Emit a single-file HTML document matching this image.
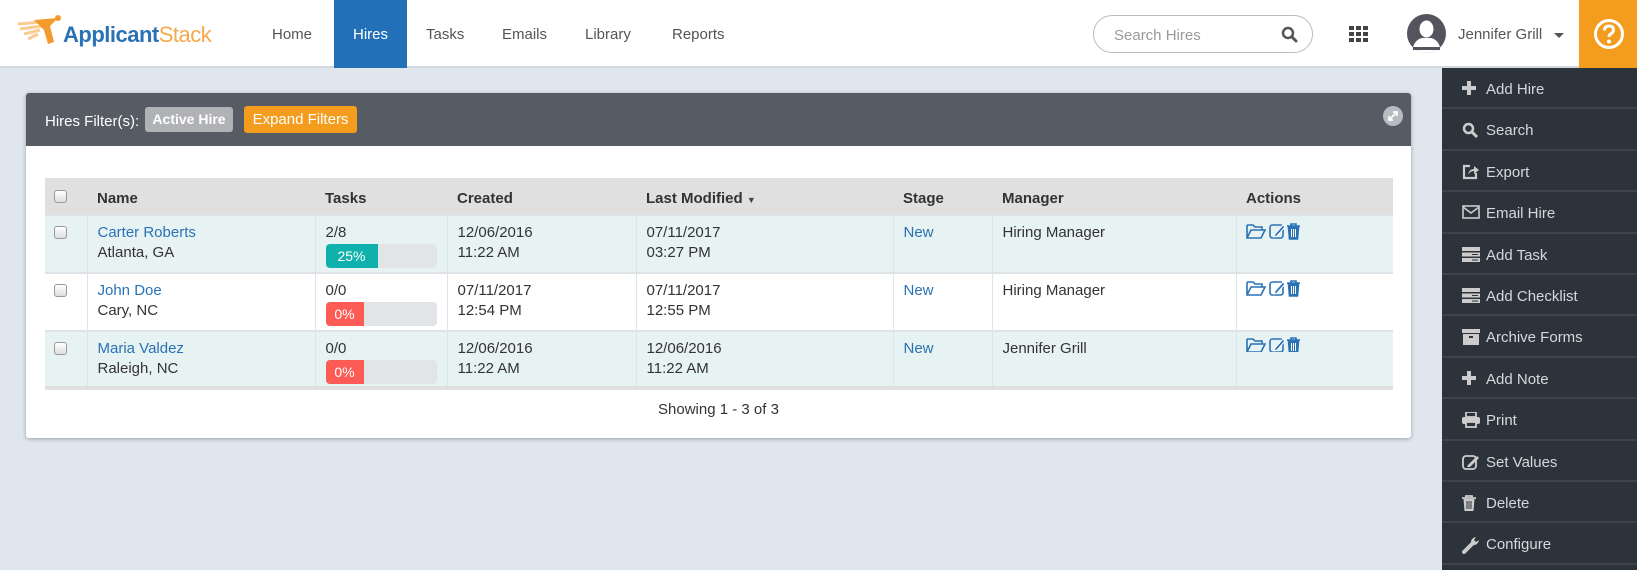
<!DOCTYPE html>
<html><head><meta charset="utf-8"><style>
*{box-sizing:border-box;margin:0;padding:0}
body{width:1637px;height:570px;overflow:hidden;background:#dfe6ee;font-family:"Liberation Sans",sans-serif;font-size:15px;color:#333;position:relative}
.hdr{position:absolute;left:0;top:0;width:1637px;height:68px;background:#fff;border-bottom:2px solid #d3d8de}
.nav{position:absolute;top:0;height:66px;line-height:70px;color:#555;font-size:15px}
.abs{position:absolute}
.side{position:absolute;left:1442px;top:68px;width:195px;height:502px;background:#2d333b}
.si{height:41.4px;border-bottom:2px solid #3d444c;color:#d5d8dc;line-height:43px;padding-left:44px;position:relative;font-size:15px}
.si svg{position:absolute;left:20px;top:13px}
.panel{position:absolute;left:26px;top:93px;width:1385px;height:345px;background:#fff;border-radius:3px;box-shadow:0 1px 4px rgba(0,0,0,.3)}
.ph{height:53px;background:#575c64;border-radius:3px 3px 0 0;position:relative;color:#fff}
table{position:absolute;left:19px;top:85px;border-collapse:collapse;width:1348px}
th{background:#e0e0e0;height:37px;text-align:left;font-weight:bold;color:#333;padding:5px 0 0 10px;font-size:15px}
td{vertical-align:top;padding:7px 0 0 10px;height:58px;border-right:1px solid #dde3e6;border-top:2px solid #dde3e6;line-height:20px}
tr.a td{background:#e7f2f2}
td:last-child{border-right:none}
.cb{display:inline-block;width:13px;height:13px;border:1px solid #999;border-radius:3px;background:linear-gradient(#fff,#ddd);margin-top:3px}
a{color:#2a72b5;text-decoration:none}
.bar{width:111px;height:24px;background:#e1e5e8;border-radius:4px;overflow:hidden;margin-top:1px}
.bar span{display:block;height:24px;color:#fff;text-align:center;line-height:24px;font-size:14px}
</style></head><body>
<div class="hdr">
  <svg class="abs" style="left:14px;top:14px" width="54" height="34" viewBox="0 0 54 34"><path d="M4 10 L28 8 M6 15 L28 12 M10 20 L26 16 M14 25 L24 20" stroke="#f7a94a" stroke-width="3" opacity=".6"/><path d="M20 6 L44 4 L36 12 L40 28 L34 30 L30 16 Z" fill="#f39a2c"/><circle cx="44" cy="4" r="3" fill="#f39a2c"/></svg>
  <div class="abs" style="left:63px;top:22px;font-size:22px;font-weight:bold;color:#2a72b5;letter-spacing:-0.5px">Applicant<span style="color:#f7a94a;font-weight:normal">Stack</span></div>
  <div class="nav" style="left:272px">Home</div>
  <div class="nav" style="left:334px;width:73px;background:#2271b8;color:#fff;text-align:center;height:68px">Hires</div>
  <div class="nav" style="left:426px">Tasks</div>
  <div class="nav" style="left:502px">Emails</div>
  <div class="nav" style="left:585px">Library</div>
  <div class="nav" style="left:672px">Reports</div>
  <div class="abs" style="left:1093px;top:15px;width:220px;height:38px;border:1px solid #bbb;border-radius:19px;color:#999;line-height:39px;padding-left:20px">Search Hires
    <svg class="abs" style="left:187px;top:10px" width="17" height="17" viewBox="0 0 17 17"><circle cx="7" cy="7" r="5" stroke="#555" stroke-width="2.5" fill="none"/><path d="M11 11 L15 15" stroke="#555" stroke-width="3" stroke-linecap="round"/></svg></div>
  <svg class="abs" style="left:1349px;top:26px" width="20" height="16"><g fill="#444"><rect x="0" y="0" width="5" height="4"/><rect x="7" y="0" width="5" height="4"/><rect x="14" y="0" width="5" height="4"/><rect x="0" y="6" width="5" height="4"/><rect x="7" y="6" width="5" height="4"/><rect x="14" y="6" width="5" height="4"/><rect x="0" y="12" width="5" height="4"/><rect x="7" y="12" width="5" height="4"/><rect x="14" y="12" width="5" height="4"/></g></svg>
  <svg class="abs" style="left:1407px;top:14px" width="39" height="39" viewBox="0 0 39 39"><clipPath id="c"><circle cx="19.5" cy="19.5" r="19.5"/></clipPath><circle cx="19.5" cy="19.5" r="19.5" fill="#55535e"/><g clip-path="url(#c)" fill="#fff"><ellipse cx="19.5" cy="15" rx="7" ry="8.5"/><path d="M5 39 Q6 26 15 24 L24 24 Q33 26 34 39 Z"/></g><rect x="6" y="33" width="27" height="3" fill="#55535e"/></svg>
  <div class="abs" style="left:1458px;top:26px;color:#555">Jennifer Grill</div>
  <div class="abs" style="left:1554px;top:33px;border-left:5px solid transparent;border-right:5px solid transparent;border-top:5px solid #555"></div>
  <div class="abs" style="left:1579px;top:0;width:58px;height:68px;background:#f39c1e">
    <svg class="abs" style="left:14px;top:18px" width="32" height="32" viewBox="0 0 32 32"><circle cx="16" cy="16" r="13.5" stroke="#fff" stroke-width="3" fill="none"/><path d="M11.5 12.5 Q11.5 8 16 8 Q20.5 8 20.5 12 Q20.5 14.5 17.5 16 Q16 17 16 19" stroke="#fff" stroke-width="3" fill="none"/><circle cx="16" cy="23.5" r="2" fill="#fff"/></svg>
  </div>
</div>
<div class="panel">
  <div class="ph">
    <div class="abs" style="left:19px;top:20px;font-size:15px">Hires Filter(s):</div>
    <div class="abs" style="left:119px;top:14px;width:88px;height:25px;background:#b0b2b5;border-radius:3px;font-weight:bold;font-size:14px;text-align:center;line-height:25px">Active Hire</div>
    <div class="abs" style="left:218px;top:13px;width:113px;height:27px;background:#f39c1e;border-radius:3px;text-align:center;line-height:28px">Expand Filters</div>
    <svg class="abs" style="left:1357px;top:13px" width="20" height="20"><circle cx="10" cy="10" r="10" fill="#b6bcc2"/><path d="M6 14 L14 6 M10 6 L14 6 L14 10 M6 10 L6 14 L10 14" stroke="#fff" stroke-width="1.7" fill="none"/></svg>
  </div>
  <table>
    <tr><th style="width:42px;padding-left:9px"><span class="cb" style="margin-top:0"></span></th><th style="width:228px">Name</th><th style="width:132px">Tasks</th><th style="width:189px">Created</th><th style="width:257px">Last Modified <span style="font-size:9px;color:#444">▼</span></th><th style="width:99px">Stage</th><th style="width:244px">Manager</th><th>Actions</th></tr>
    <tr class="a"><td style="padding-left:9px"><span class="cb"></span></td><td><a>Carter Roberts</a><br>Atlanta, GA</td><td>2/8<div class="bar"><span style="width:52px;background:#10b0ac">25%</span></div></td><td>12/06/2016<br>11:22 AM</td><td>07/11/2017<br>03:27 PM</td><td><a>New</a></td><td>Hiring Manager</td><td class="ic"></td></tr>
    <tr><td style="padding-left:9px"><span class="cb"></span></td><td><a>John Doe</a><br>Cary, NC</td><td>0/0<div class="bar"><span style="width:38px;background:#fd5b55">0%</span></div></td><td>07/11/2017<br>12:54 PM</td><td>07/11/2017<br>12:55 PM</td><td><a>New</a></td><td>Hiring Manager</td><td class="ic"></td></tr>
    <tr class="a"><td style="padding-left:9px"><span class="cb"></span></td><td><a>Maria Valdez</a><br>Raleigh, NC</td><td>0/0<div class="bar"><span style="width:38px;background:#fd5b55">0%</span></div></td><td>12/06/2016<br>11:22 AM</td><td>12/06/2016<br>11:22 AM</td><td><a>New</a></td><td>Jennifer Grill</td><td class="ic"></td></tr>
  </table>
  <div class="abs" style="left:19px;top:293px;width:1348px;height:4px;background:#e0e0e0"></div>
  <div class="abs" style="left:0;top:308px;width:1385px;text-align:center;color:#333">Showing 1 - 3 of 3</div>
</div>
<svg class="abs" style="left:1246px;top:222px" width="60" height="130">
<defs><g id="ic" fill="none" stroke="#2a72b5" stroke-width="1.6">
<path d="M1 3 L7 3 L9 5 L16 5 L16 8 M1 3 L1 16 L15 16 L19 8 L5 8 L1 16"/>
<rect x="24" y="3" width="13" height="13" rx="2.5"/>
<path d="M29 12 L37 3 L39 5 L31 14 L28 15 Z" fill="#2a72b5" stroke="#fff" stroke-width="1"/>
<path d="M41 4 L54 4 M45 4 L45 2 L50 2 L50 4" />
<path d="M42.5 5 L43.5 17 L51.5 17 L52.5 5 Z" fill="#2a72b5"/>
<path d="M45.5 7 L45.5 15 M47.5 7 L47.5 15 M49.5 7 L49.5 15" stroke="#fff" stroke-width="1"/>
</g></defs>
<use href="#ic" y="0"/><use href="#ic" y="57"/><use href="#ic" y="114"/>
</svg>
<div class="side">
  <div class="si"><svg width="14" height="14"><path d="M7 0V14M0 7H14" stroke="#ccc" stroke-width="4"/></svg>Add Hire</div>
  <div class="si"><svg width="16" height="16"><circle cx="6.5" cy="6.5" r="4.5" stroke="#ccc" stroke-width="2.5" fill="none"/><path d="M10 10L15 15" stroke="#ccc" stroke-width="3"/></svg>Search</div>
  <div class="si"><svg width="17" height="16"><path d="M8 2H2V14H14V9" stroke="#ccc" stroke-width="2.2" fill="none"/><path d="M6 11Q7 5 12 5V2L17 6L12 10V7Q8 7 6 11Z" fill="#ccc"/></svg>Export</div>
  <div class="si"><svg width="18" height="14"><rect x="1" y="1" width="16" height="12" stroke="#ccc" stroke-width="1.6" fill="none"/><path d="M1 2L9 8L17 2" stroke="#ccc" stroke-width="1.6" fill="none"/></svg>Email Hire</div>
  <div class="si"><svg width="18" height="15"><g fill="#ccc"><rect y="0" width="18" height="4"/><rect y="5.5" width="18" height="4"/><rect y="11" width="18" height="4"/></g><path d="M10 7.5H16M10 13H16" stroke="#2d333b"/></svg>Add Task</div>
  <div class="si"><svg width="18" height="15"><g fill="#ccc"><rect y="0" width="18" height="4"/><rect y="5.5" width="18" height="4"/><rect y="11" width="18" height="4"/></g><path d="M10 7.5H16M10 13H16" stroke="#2d333b"/></svg>Add Checklist</div>
  <div class="si"><svg width="18" height="16"><rect y="0" width="18" height="4" fill="#ccc"/><rect x="1" y="5" width="16" height="11" fill="#ccc"/><rect x="7" y="7" width="4" height="2" fill="#2d333b"/></svg>Archive Forms</div>
  <div class="si"><svg width="14" height="14"><path d="M7 0V14M0 7H14" stroke="#ccc" stroke-width="4"/></svg>Add Note</div>
  <div class="si"><svg width="18" height="16"><rect x="4" y="0" width="10" height="5" stroke="#ccc" stroke-width="1.8" fill="none"/><rect x="0" y="5" width="18" height="7" rx="2" fill="#ccc"/><rect x="4" y="10" width="10" height="5" stroke="#ccc" stroke-width="1.8" fill="#2d333b"/></svg>Print</div>
  <div class="si"><svg width="18" height="16"><rect x="1" y="2" width="13" height="13" rx="3" stroke="#ccc" stroke-width="1.8" fill="none"/><path d="M6 11L15 2L17 4L8 13L5 13Z" fill="#ccc"/></svg>Set Values</div>
  <div class="si"><svg width="14" height="16"><path d="M0 3H14M4 3V1H10V3" stroke="#ccc" stroke-width="1.8" fill="none"/><path d="M1.5 4L2.5 16H11.5L12.5 4Z" fill="#ccc"/><path d="M5 6V14M7 6V14M9 6V14" stroke="#2d333b"/></svg>Delete</div>
  <div class="si"><svg width="18" height="18"><path d="M2 16L10 8" stroke="#ccc" stroke-width="4" stroke-linecap="round"/><path d="M9 9Q8 2 14 1L12 4L14 6L17 4Q16 10 9 9Z" fill="#ccc"/></svg>Configure</div>
</div>
</body></html>
